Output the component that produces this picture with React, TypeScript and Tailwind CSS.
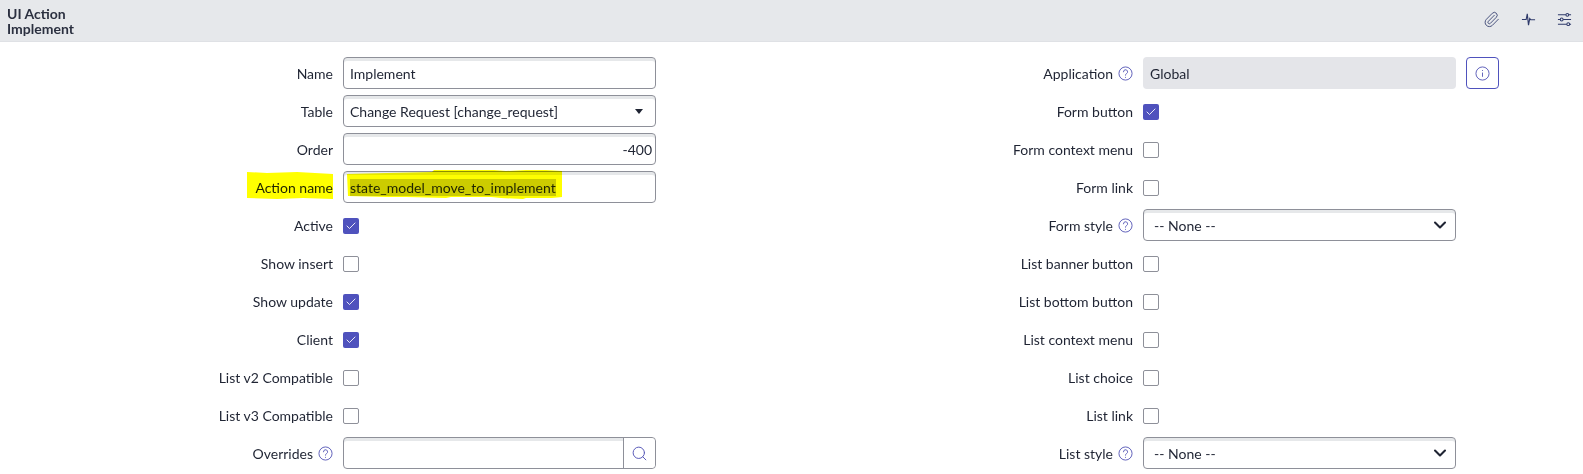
import { Paperclip, Search, ChevronDown, Check } from 'lucide-react';
import type { ReactNode } from 'react';

const inputBox = 'h-8 w-[313px] rounded-[4px] border border-[#8e9099] bg-white shadow-[inset_0_3px_0_#e6e8ea] flex items-center text-[14px] text-[#1f2433]';

function Help() {
  return (
    <svg viewBox="0 0 16 16" className="h-[15px] w-[15px] ml-[5px] shrink-0" fill="none" stroke="#5a5bb8" strokeWidth="1">
      <circle cx="8" cy="8" r="7" />
      <path d="M5.8 6.2a2.2 2.2 0 1 1 3.3 1.9c-.8.5-1.1.9-1.1 1.7" strokeLinecap="round" />
      <circle cx="8" cy="12" r=".6" fill="#5a5bb8" stroke="none" />
    </svg>
  );
}

function Checkbox({ on }: { on?: boolean }) {
  if (on) {
    return (
      <div className="mt-[2px] h-4 w-4 rounded-[2px] bg-[#4f52bd] flex items-center justify-center">
        <Check className="h-3 w-3 text-white" strokeWidth={1.75} />
      </div>
    );
  }
  return <div className="mt-[2px] h-4 w-4 rounded-[2px] border border-[#8e9099] bg-white" />;
}

function SelectBox() {
  return (
    <div className={`${inputBox} justify-between pl-[10px] pr-[5px]`}>
      <span>-- None --</span>
      <ChevronDown className="h-5 w-5 text-[#1f2433]" strokeWidth={2.5} />
    </div>
  );
}

type FormRow = { label: string; help?: boolean; field: ReactNode };

const leftRows: FormRow[] = [
  { label: 'Name', field: <div className={`${inputBox} px-[6px]`}>Implement</div> },
  {
    label: 'Table',
    field: (
      <div className={`${inputBox} justify-between pl-[6px] pr-[12px]`}>
        <span>Change Request [change_request]</span>
        <span className="h-0 w-0 border-x-[4px] border-t-[5px] border-x-transparent border-t-[#1f2433]" />
      </div>
    ),
  },
  { label: 'Order', field: <div className={`${inputBox} justify-end px-[3px]`}>-400</div> },
  {
    label: 'Action name',
    field: (
      <div className={`${inputBox} px-[6px]`}>
        <span className="bg-[#cccccc] leading-[17px]">state_model_move_to_implement</span>
      </div>
    ),
  },
  { label: 'Active', field: <Checkbox on /> },
  { label: 'Show insert', field: <Checkbox /> },
  { label: 'Show update', field: <Checkbox on /> },
  { label: 'Client', field: <Checkbox on /> },
  { label: 'List v2 Compatible', field: <Checkbox /> },
  { label: 'List v3 Compatible', field: <Checkbox /> },
  {
    label: 'Overrides',
    help: true,
    field: (
      <div className={`${inputBox} justify-end`}>
        <div className="h-full w-[32px] border-l border-[#8e9099] bg-white rounded-r-[4px] flex items-center justify-center">
          <Search className="h-[17px] w-[17px] text-[#5a5bb8]" strokeWidth={1.4} />
        </div>
      </div>
    ),
  },
];

const rightRows: FormRow[] = [
  {
    label: 'Application',
    help: true,
    field: (
      <div className="flex items-center gap-[10px]">
        <div className="h-8 w-[313px] shrink-0 rounded-[4px] bg-[#e4e5e9] flex items-center pl-[7px] text-[14px] text-[#1f2433]">Global</div>
        <div className="h-8 w-[33px] shrink-0 rounded-[4px] border border-[#4f52bd] bg-white flex items-center justify-center">
          <svg viewBox="0 0 16 16" className="h-[15px] w-[15px]" fill="none" stroke="#5a5bb8" strokeWidth="1">
            <circle cx="8" cy="8" r="7" />
            <path d="M8 7v4.5" />
            <circle cx="8" cy="4.8" r=".6" fill="#5a5bb8" stroke="none" />
          </svg>
        </div>
      </div>
    ),
  },
  { label: 'Form button', field: <Checkbox on /> },
  { label: 'Form context menu', field: <Checkbox /> },
  { label: 'Form link', field: <Checkbox /> },
  { label: 'Form style', help: true, field: <SelectBox /> },
  { label: 'List banner button', field: <Checkbox /> },
  { label: 'List bottom button', field: <Checkbox /> },
  { label: 'List context menu', field: <Checkbox /> },
  { label: 'List choice', field: <Checkbox /> },
  { label: 'List link', field: <Checkbox /> },
  { label: 'List style', help: true, field: <SelectBox /> },
];

function Row({ row }: { row: FormRow }) {
  return (
    <div className="h-[38px] flex items-center gap-[10px]">
      <div className="flex-1 flex items-center justify-end text-[14px] text-[#1f2433]">
        <span>{row.label}</span>
        {row.help && <Help />}
      </div>
      <div className="w-[356px] shrink-0">{row.field}</div>
    </div>
  );
}

export default function App() {
  return (
    <div className="relative h-[474px] w-[1583px] overflow-hidden bg-white font-['Lato','Liberation_Sans',sans-serif]">
      {/* Header */}
      <div className="h-[42px] bg-[#e6e8eb] border-b border-[#dfe1e5] flex items-center justify-between pl-[7px] pr-[11px]">
        <div className="text-[14px] leading-[15px] font-bold text-[#2b3040]">
          <div>UI Action</div>
          <div>Implement</div>
        </div>
        <div className="flex items-center gap-[21px] text-[#2f3a6b] pb-[3px]">
          <Paperclip className="h-[17px] w-[17px]" strokeWidth={1.2} />
          <svg viewBox="0 0 16 16" className="h-[15px] w-[15px]" fill="none" stroke="currentColor" strokeWidth="1.2">
            <path d="M1 8h4.5l1.2-6 1.3 12 1.3-7 .9 1.2H15" />
          </svg>
          <svg viewBox="0 0 16 16" className="h-[15px] w-[15px]" fill="none" stroke="currentColor" strokeWidth="1.1">
            <path d="M1 3h8.5M12.5 3H15M1 8h2.5M6.5 8H15M1 13h9.5M13.5 13H15" />
            <circle cx="11" cy="3" r="1.5" />
            <circle cx="5" cy="8" r="1.5" />
            <circle cx="12" cy="13" r="1.5" />
          </svg>
        </div>
      </div>

      {/* Form */}
      <div className="grid grid-cols-[699px_800px] pt-[12px]">
        <div>
          {leftRows.map((r) => (
            <Row key={r.label} row={r} />
          ))}
        </div>
        <div>
          {rightRows.map((r) => (
            <Row key={r.label} row={r} />
          ))}
        </div>
      </div>

      {/* Marker highlight drawn over the screenshot */}
      <svg className="absolute left-0 top-0 h-[474px] w-[1583px] mix-blend-multiply pointer-events-none" viewBox="0 0 1583 474">
        <path fill="#ffff00" d="M247 172l20 1 30-1 36 2v25l-30-1-26 1-30-1z" />
        <path fill="#ffff00" d="M347 174l40-1 45-1 2-2 60 0 12 1 20-1 20 0 16 1 0 26-10 1-26 0-3 1-22-1-10-1-40 0-5 1-40-1-20 0-38-1z" />
      </svg>
    </div>
  );
}
